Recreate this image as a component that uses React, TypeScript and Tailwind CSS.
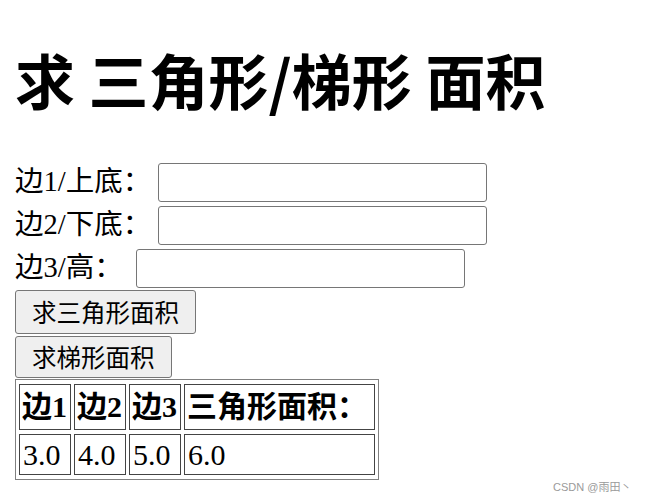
import React from 'react';

const serif = "font-['Liberation_Serif','Noto_Sans_CJK_SC',serif]";

function Field({ label, labelWidth }: { label: string; labelWidth: string }) {
  return (
    <div className="flex h-[43px] items-center">
      <span className={`${labelWidth} shrink-0 whitespace-nowrap text-[28.5px] leading-none`}>{label}</span>
      <input
        type="text"
        className="h-[39px] w-[329px] rounded-[3px] border border-[#767676] bg-white px-1 outline-none"
      />
    </div>
  );
}

export default function App() {
  const head = ['边1', '边2', '边3', '三角形面积：'];
  const row = ['3.0', '4.0', '5.0', '6.0'];
  const widths = ['w-[52px]', 'w-[52px]', 'w-[52px]', 'w-[191px]'];

  return (
    <div className={`relative min-h-[503px] bg-white px-[15px] text-black ${serif}`}>
      <h1 className="pt-[39px] h-[161px] font-['Noto_Sans_CJK_SC',sans-serif] text-[60px] font-bold leading-[80px] whitespace-nowrap">
        求 三角形/梯形 面积
      </h1>

      <Field label="边1/上底：" labelWidth="w-[143px]" />
      <Field label="边2/下底：" labelWidth="w-[143px]" />
      <Field label="边3/高：" labelWidth="w-[121px]" />

      <div className="flex flex-col items-start gap-[2px] font-['Noto_Sans_CJK_SC',sans-serif]">
        <button className="h-[44px] rounded-[3px] border border-[#767676] bg-[#efefef] px-[16px] text-[24.5px] leading-none">
          求三角形面积
        </button>
        <button className="h-[42px] rounded-[3px] border border-[#767676] bg-[#efefef] px-[16px] text-[24.5px] leading-none">
          求梯形面积
        </button>
      </div>

      <table className="mt-[1px] border-separate border-spacing-x-[3.5px] border-spacing-y-[4px] border border-[#808080]">
        <tbody>
          <tr>
            {head.map((h, i) => (
              <th
                key={h}
                className={`${widths[i]} h-[46px] border border-[#444] px-[2px] text-left text-[30px] font-bold leading-none whitespace-nowrap`}
              >
                {h}
              </th>
            ))}
          </tr>
          <tr>
            {row.map((v, i) => (
              <td
                key={i}
                className={`${widths[i]} h-[41px] border border-[#444] px-[3px] text-left text-[30px] leading-none`}
              >
                {v}
              </td>
            ))}
          </tr>
        </tbody>
      </table>

      <div className="absolute bottom-[8px] left-[553px] font-['Liberation_Sans','Noto_Sans_CJK_SC',sans-serif] text-[11px] text-[#9a9a9a] whitespace-nowrap">
        CSDN @雨田丶
      </div>
    </div>
  );
}
